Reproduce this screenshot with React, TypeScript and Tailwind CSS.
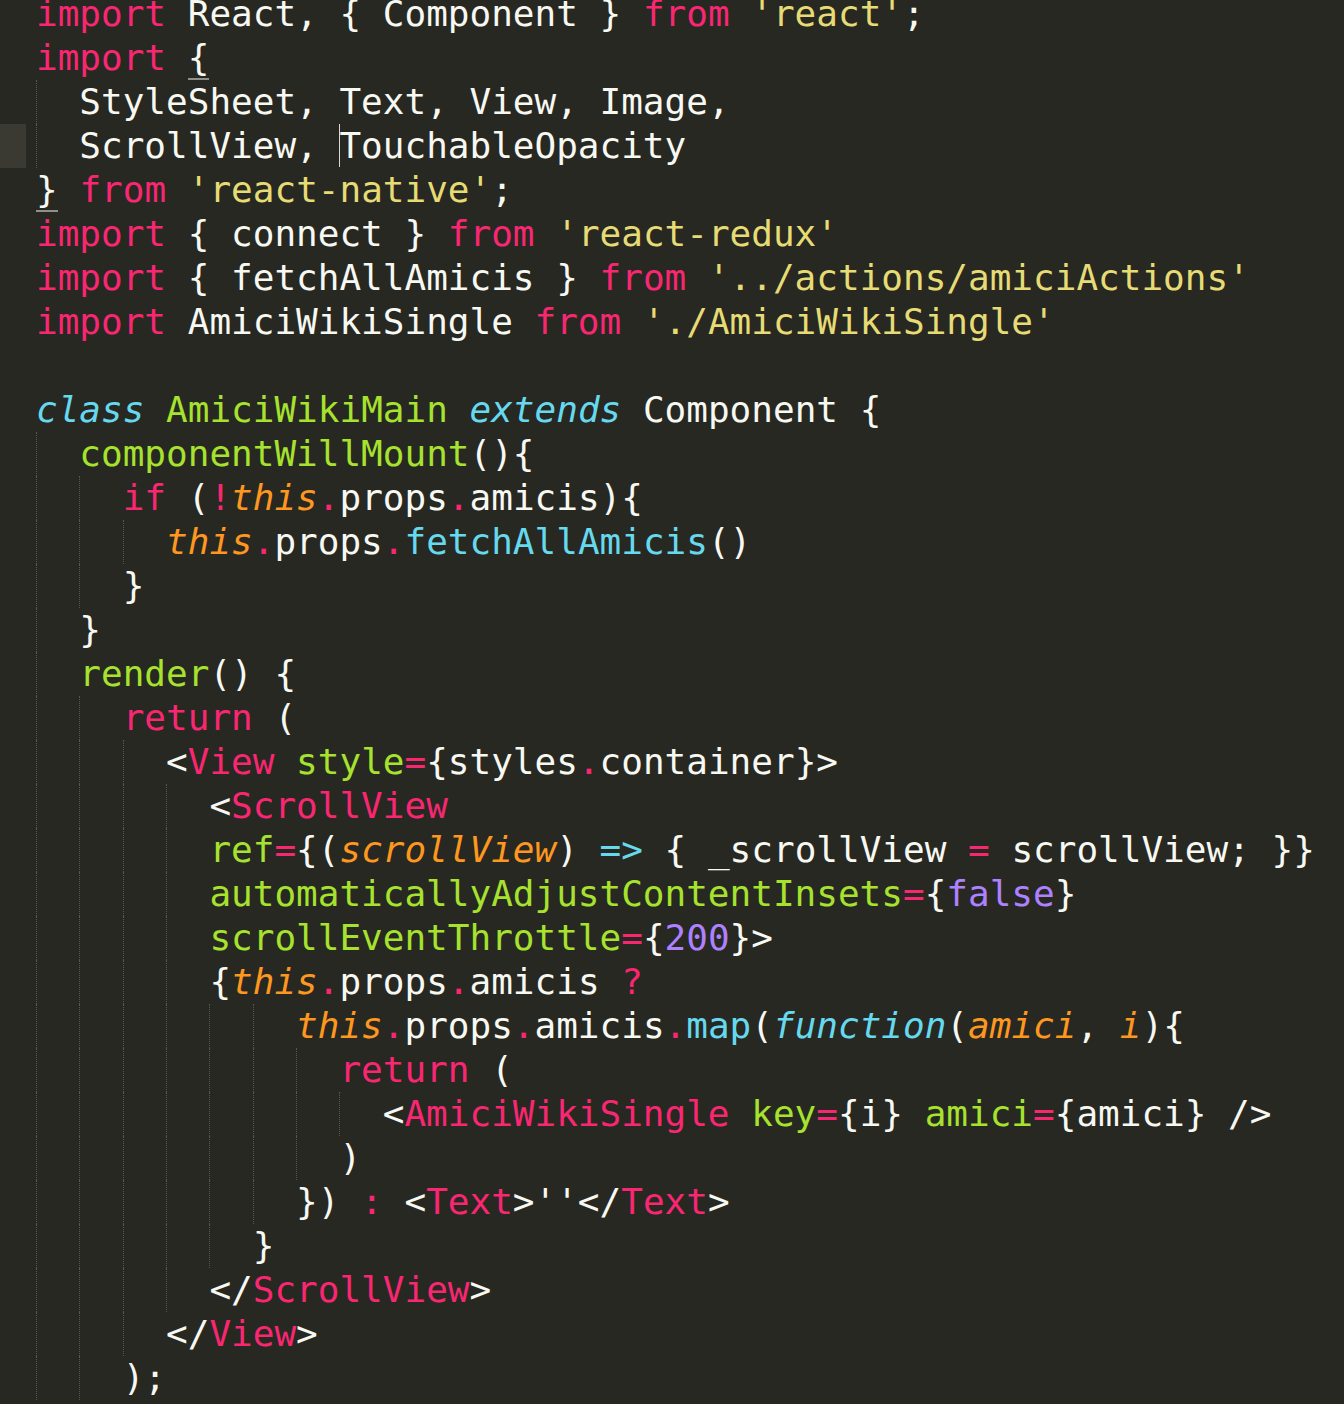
import { FC } from 'react';

type Tok = [string, string?];
type Line = { indent: number; toks: Tok[] };

const K = 'text-[#f92672]';
const S = 'text-[#e6db74]';
const G = 'text-[#a6e22e]';
const C = 'text-[#66d9ef]';
const CI = 'text-[#66d9ef] italic';
const O = 'text-[#fd971f] italic';
const P = 'text-[#ae81ff]';
const U = 'border-b-2 border-[#8f908a]';
const CURSOR = 'cursor';

const lines: Line[] = [
  { indent: 0, toks: [['import', K], [' React, { Component } '], ['from', K], [' '], ["'react'", S], [';']] },
  { indent: 0, toks: [['import', K], [' '], ['{', U]] },
  { indent: 2, toks: [['StyleSheet, Text, View, Image,']] },
  { indent: 2, toks: [['ScrollView, '], ['', CURSOR], ['TouchableOpacity']] },
  { indent: 0, toks: [['}', U], [' '], ['from', K], [' '], ["'react-native'", S], [';']] },
  { indent: 0, toks: [['import', K], [' { connect } '], ['from', K], [' '], ["'react-redux'", S]] },
  { indent: 0, toks: [['import', K], [' { fetchAllAmicis } '], ['from', K], [' '], ["'../actions/amiciActions'", S]] },
  { indent: 0, toks: [['import', K], [' AmiciWikiSingle '], ['from', K], [' '], ["'./AmiciWikiSingle'", S]] },
  { indent: 0, toks: [] },
  { indent: 0, toks: [['class', CI], [' '], ['AmiciWikiMain', G], [' '], ['extends', CI], [' Component {']] },
  { indent: 2, toks: [['componentWillMount', G], ['(){']] },
  { indent: 4, toks: [['if', K], [' ('], ['!', K], ['this', O], ['.', K], ['props'], ['.', K], ['amicis){']] },
  { indent: 6, toks: [['this', O], ['.', K], ['props'], ['.', K], ['fetchAllAmicis', C], ['()']] },
  { indent: 4, toks: [['}']] },
  { indent: 2, toks: [['}']] },
  { indent: 2, toks: [['render', G], ['() {']] },
  { indent: 4, toks: [['return', K], [' (']] },
  { indent: 6, toks: [['<'], ['View', K], [' '], ['style', G], ['=', K], ['{styles'], ['.', K], ['container}>']] },
  { indent: 8, toks: [['<'], ['ScrollView', K]] },
  {
    indent: 8,
    toks: [['ref', G], ['=', K], ['{('], ['scrollView', O], [') '], ['=>', C], [' { _scrollView '], ['=', K], [' scrollView; }}']],
  },
  { indent: 8, toks: [['automaticallyAdjustContentInsets', G], ['=', K], ['{'], ['false', P], ['}']] },
  { indent: 8, toks: [['scrollEventThrottle', G], ['=', K], ['{'], ['200', P], ['}>']] },
  { indent: 8, toks: [['{'], ['this', O], ['.', K], ['props'], ['.', K], ['amicis '], ['?', K]] },
  {
    indent: 12,
    toks: [
      ['this', O], ['.', K], ['props'], ['.', K], ['amicis'], ['.', K], ['map', C], ['('],
      ['function', CI], ['('], ['amici', O], [', '], ['i', O], ['){'],
    ],
  },
  { indent: 14, toks: [['return', K], [' (']] },
  {
    indent: 16,
    toks: [['<'], ['AmiciWikiSingle', K], [' '], ['key', G], ['=', K], ['{i} '], ['amici', G], ['=', K], ['{amici} />']],
  },
  { indent: 14, toks: [[')']] },
  { indent: 12, toks: [['}) '], [':', K], [' <'], ['Text', K], [">''</"], ['Text', K], ['>']] },
  { indent: 10, toks: [['}']] },
  { indent: 8, toks: [['</'], ['ScrollView', K], ['>']] },
  { indent: 6, toks: [['</'], ['View', K], ['>']] },
  { indent: 4, toks: [[');']] },
];

const CodeLine: FC<{ line: Line; active: boolean }> = ({ line, active }) => (
  <div className="flex h-[44px]">
    <div className={`w-[26px] shrink-0 ${active ? 'bg-[#3b3a32]' : ''}`} />
    <div className="pl-[10px] whitespace-pre leading-[44px]">
      {Array.from({ length: line.indent / 2 }).map((_, i) => (
        <span key={i} className="inline-block h-[44px] w-[2ch] align-top border-l border-dotted border-[#57574f]" />
      ))}
      {line.toks.map(([text, cls], i) =>
        cls === CURSOR ? (
          <span key={i} className="inline-block h-[43px] w-px -mr-px align-top bg-[#d8d8d0]" />
        ) : (
          <span key={i} className={cls}>
            {text}
          </span>
        ),
      )}
    </div>
  </div>
);

const App: FC = () => (
  <div className="h-[1404px] overflow-hidden bg-[#272822] text-[#f8f8f2] font-['DejaVu_Sans_Mono',Menlo,monospace] text-[36px]">
    <div className="-mt-2">
      {lines.map((line, i) => (
        <CodeLine key={i} line={line} active={i === 3} />
      ))}
    </div>
  </div>
);

export default App;
